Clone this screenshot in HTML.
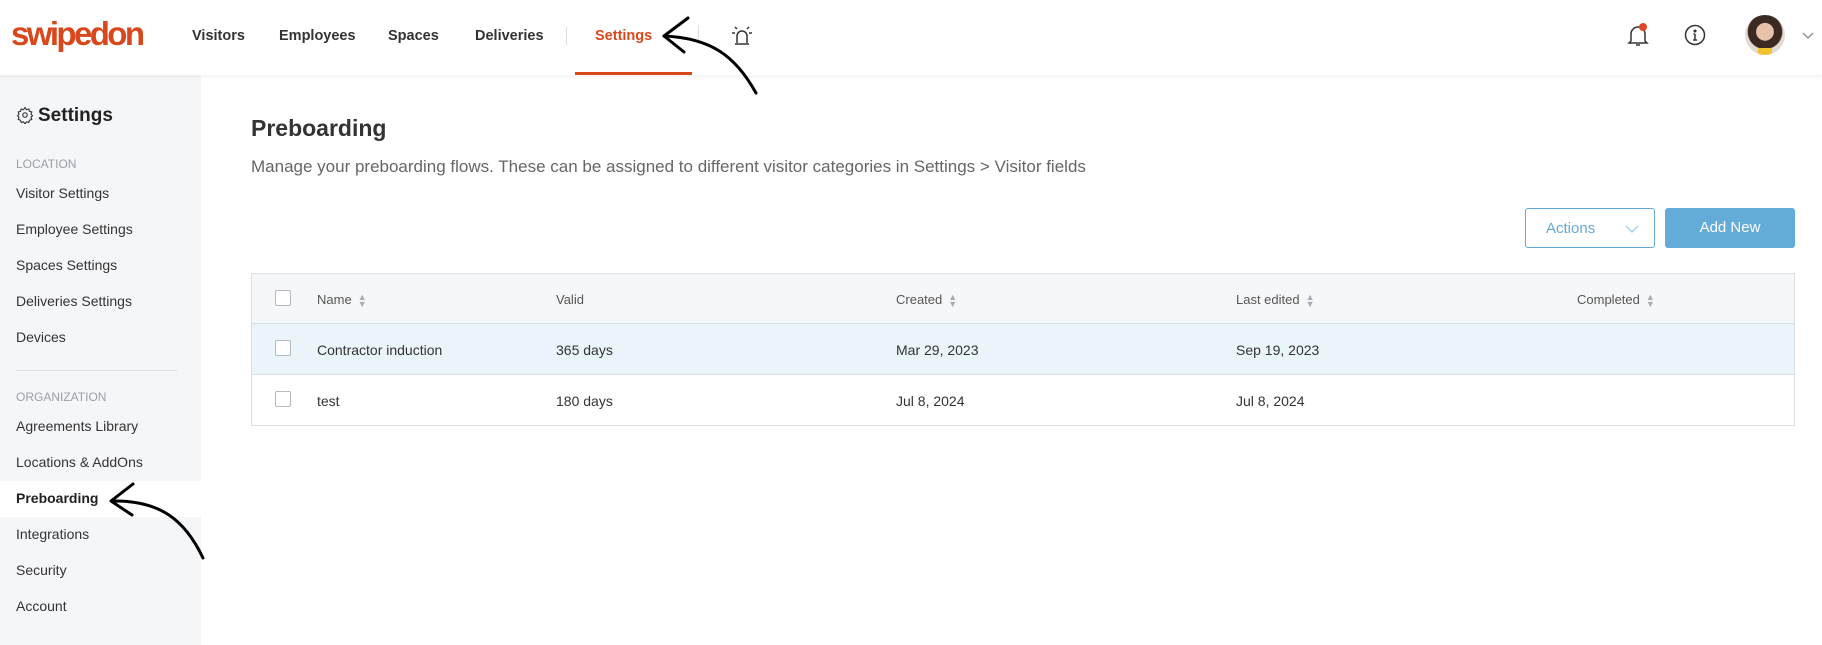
<!DOCTYPE html>
<html><head><meta charset="utf-8"><style>
*{margin:0;padding:0;box-sizing:border-box}
body{width:1822px;height:645px;overflow:hidden;background:#fff;font-family:"Liberation Sans",sans-serif;position:relative;color:#2b2b2b}
.hdr{position:absolute;left:0;top:0;width:1822px;height:75px;background:#fff;box-shadow:0 2px 4px rgba(0,0,0,.05);z-index:2}
.logo{position:absolute;left:11px;top:15px;font-size:33px;font-weight:bold;color:#d9481c;letter-spacing:-2.6px}
.nav{position:absolute;top:28px;font-size:14.5px;font-weight:bold;color:#333}
.side{position:absolute;left:0;top:75px;width:201px;height:570px;background:#f5f6f8}
.si{position:absolute;left:16px;font-size:14px;color:#333}
.cap{position:absolute;left:16px;font-size:12px;color:#9aa0a8}
.main{position:absolute;left:251px}
.tbl{position:absolute;left:251px;top:273px;width:1544px;height:153px;border:1px solid #dcdfe3}
.row{position:absolute;left:0;width:1542px;font-size:14px;color:#333}
.cell{position:absolute}
.cb{position:absolute;left:23px;width:16px;height:16px;border:1px solid #b5b9bf;border-radius:2px;background:#fff}
.sort{display:inline-block;margin-left:6px;vertical-align:middle;color:#a8adb4;font-size:9px;line-height:7px}
</style></head><body>
<div class="hdr">
<div class="logo">swipedon</div>
<div class="nav" style="left:192px">Visitors</div>
<div class="nav" style="left:279px">Employees</div>
<div class="nav" style="left:388px">Spaces</div>
<div class="nav" style="left:475px">Deliveries</div>
<div style="position:absolute;left:566px;top:27px;width:1px;height:18px;background:#ddd"></div>
<div class="nav" style="left:595px;color:#d9481c">Settings</div>
<div style="position:absolute;left:575px;top:72px;width:117px;height:3px;background:#d9481c"></div>
<div style="position:absolute;left:698px;top:25px;width:1px;height:18px;background:#ddd"></div>
<svg style="position:absolute;left:729px;top:24px" width="26" height="24" viewBox="0 0 26 24" fill="none" stroke="#333" stroke-width="1.5"><path d="M8 19V12a5 5 0 0 1 10 0v7M6 20h14M3 9h3M20 9h3M6 3l2 2M20 3l-2 2"/></svg>
<svg style="position:absolute;left:1626px;top:22px" width="24" height="26" viewBox="0 0 24 26" fill="none" stroke="#333" stroke-width="1.5"><path d="M5 19V12a7 7 0 0 1 14 0v7l2 2H3zM10 23h4"/><circle cx="17" cy="5" r="4" fill="#e0462a" stroke="none"/></svg>
<svg style="position:absolute;left:1684px;top:24px" width="22" height="22" viewBox="0 0 22 22" fill="none" stroke="#333" stroke-width="1.5"><circle cx="11" cy="11" r="9.5"/><path d="M11 10v6M9 16h4M9.5 10H11"/><circle cx="11" cy="7" r=".8" fill="#333"/></svg>
<div style="position:absolute;left:1745px;top:15px;width:40px;height:40px;border-radius:50%;background:radial-gradient(circle at 50% 42%,#e8c2a8 0 28%,#3a2a22 30% 55%,#e2dbd3 58%);overflow:hidden"><div style="position:absolute;left:13px;top:33px;width:14px;height:8px;background:#f1c232"></div></div>
<svg style="position:absolute;left:1801px;top:30px" width="14" height="10" viewBox="0 0 14 10" fill="none" stroke="#888" stroke-width="1.3"><path d="M2 3l5 5 5-5"/></svg>
</div>

<div class="side">
<svg style="position:absolute;left:16px;top:31px" width="18" height="18" viewBox="0 0 24 24" fill="none" stroke="#333" stroke-width="1.5"><circle cx="12" cy="12" r="3"/><path d="M12 2l2 3 3-1 1 3 3 1-1 3 2 2-2 2 1 3-3 1-1 3-3-1-2 3-2-3-3 1-1-3-3-1 1-3-2-2 2-2-1-3 3-1 1-3 3 1z"/></svg>
<div style="position:absolute;left:38px;top:30px;font-size:19px;font-weight:bold;color:#222">Settings</div>
<div class="cap" style="top:82px">LOCATION</div>
<div class="si" style="top:110px">Visitor Settings</div>
<div class="si" style="top:146px">Employee Settings</div>
<div class="si" style="top:182px">Spaces Settings</div>
<div class="si" style="top:218px">Deliveries Settings</div>
<div class="si" style="top:254px">Devices</div>
<div style="position:absolute;left:16px;top:295px;width:161px;height:1px;background:#dcdfe3"></div>
<div class="cap" style="top:315px">ORGANIZATION</div>
<div class="si" style="top:343px">Agreements Library</div>
<div class="si" style="top:379px">Locations &amp; AddOns</div>
<div style="position:absolute;left:0;top:406px;width:201px;height:36px;background:#fff"></div>
<div class="si" style="top:415px;font-weight:bold;color:#222">Preboarding</div>
<div class="si" style="top:451px">Integrations</div>
<div class="si" style="top:487px">Security</div>
<div class="si" style="top:523px">Account</div>
</div>

<div class="main" style="top:115px;font-size:23px;font-weight:bold;color:#333">Preboarding</div>
<div class="main" style="top:157px;font-size:17px;color:#666">Manage your preboarding flows. These can be assigned to different visitor categories in Settings &gt; Visitor fields</div>

<div style="position:absolute;left:1525px;top:208px;width:130px;height:40px;border:1px solid #62a9d8;border-radius:3px;color:#62a9d8;font-size:15px;padding:11px 0 0 20px">Actions
<svg style="position:absolute;left:99px;top:16px" width="14" height="9" viewBox="0 0 14 9" fill="none" stroke="#9ccbe9" stroke-width="1.3"><path d="M1 1l6 6 6-6"/></svg></div>
<div style="position:absolute;left:1665px;top:208px;width:130px;height:40px;background:#63acda;border-radius:3px;color:#fff;font-size:15px;text-align:center;padding-top:11px">Add New</div>

<div class="tbl">
<div class="row" style="top:0;height:50px;background:#f6f7f9;border-bottom:1px solid #dcdfe3;color:#555;font-size:13px">
<div class="cb" style="top:16px"></div>
<div class="cell" style="left:65px;top:18px">Name<span class="sort">▲<br>▼</span></div>
<div class="cell" style="left:304px;top:18px">Valid</div>
<div class="cell" style="left:644px;top:18px">Created<span class="sort">▲<br>▼</span></div>
<div class="cell" style="left:984px;top:18px">Last edited<span class="sort">▲<br>▼</span></div>
<div class="cell" style="left:1325px;top:18px">Completed<span class="sort">▲<br>▼</span></div>
</div>
<div class="row" style="top:50px;height:51px;background:#eaf4fb;border-bottom:1px solid #dcdfe3">
<div class="cb" style="top:16px"></div>
<div class="cell" style="left:65px;top:18px">Contractor induction</div>
<div class="cell" style="left:304px;top:18px">365 days</div>
<div class="cell" style="left:644px;top:18px">Mar 29, 2023</div>
<div class="cell" style="left:984px;top:18px">Sep 19, 2023</div>
</div>
<div class="row" style="top:101px;height:51px">
<div class="cb" style="top:16px"></div>
<div class="cell" style="left:65px;top:18px">test</div>
<div class="cell" style="left:304px;top:18px">180 days</div>
<div class="cell" style="left:644px;top:18px">Jul 8, 2024</div>
<div class="cell" style="left:984px;top:18px">Jul 8, 2024</div>
</div>
</div>

<svg style="position:absolute;left:0;top:0;z-index:5" width="1822" height="645" fill="none" stroke="#000" stroke-width="3" stroke-linecap="round" stroke-linejoin="round">
<path d="M756 93C735 55 710 38 664 36"/><path d="M688 18L664 36L684 52"/>
<path d="M203 558C185 520 160 500 112 501"/><path d="M133 484L111 501L132 515"/>
</svg>
</body></html>
